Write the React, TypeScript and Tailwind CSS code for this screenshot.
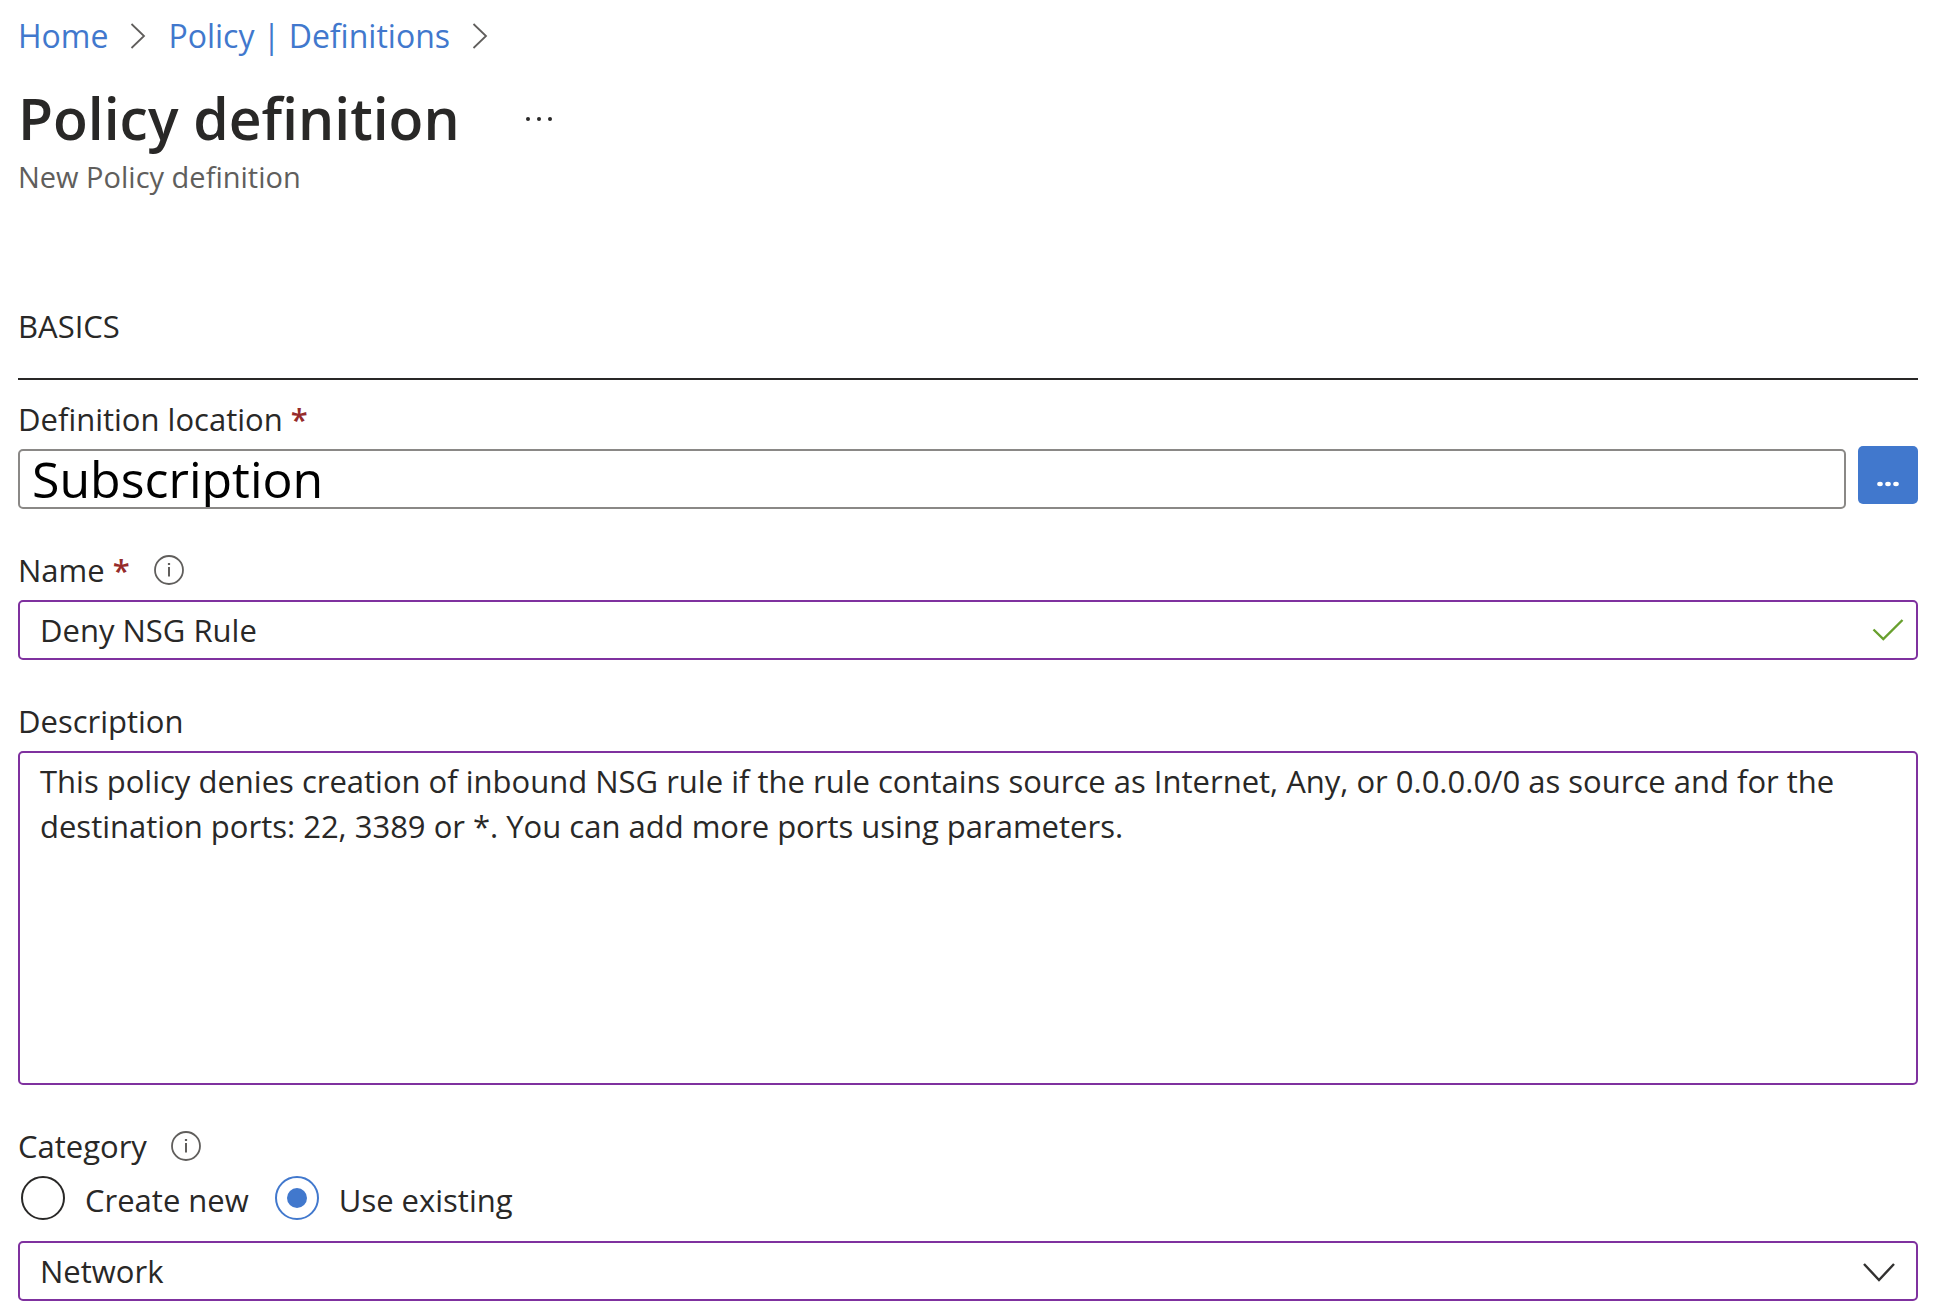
import { useState } from "react";
import type { ReactNode } from "react";

const DESCRIPTION =
  "This policy denies creation of inbound NSG rule if the rule contains source as Internet, Any, or 0.0.0.0/0 as source and for the destination ports: 22, 3389 or *. You can add more ports using parameters.";

function Chevron() {
  return (
    <svg width="16" height="28" viewBox="0 0 16 28" fill="none" stroke="#605e5c" strokeWidth="1.8" aria-hidden="true">
      <path d="M1.5 2 14 14 1.5 26" />
    </svg>
  );
}

function InfoIcon() {
  return (
    <svg width="30" height="30" viewBox="0 0 30 30" fill="none" stroke="#605e5c" role="img" aria-label="More info">
      <circle cx="15" cy="15" r="14" strokeWidth="1.8" />
      <path d="M15 12V21.5" strokeWidth="2" />
      <path d="M15 8V10" strokeWidth="2.2" />
    </svg>
  );
}

function Required() {
  return <span className="ml-2 font-semibold text-[#962b2b]">*</span>;
}

interface FieldProps {
  label: string;
  htmlFor: string;
  required?: boolean;
  info?: boolean;
  children: ReactNode;
}

function Field({ label, htmlFor, required, info, children }: FieldProps) {
  return (
    <div className="flex flex-col gap-2">
      <div className="flex items-center gap-6">
        <label htmlFor={htmlFor} className="leading-[44px]">
          {label}
          {required && <Required />}
        </label>
        {info && <InfoIcon />}
      </div>
      {children}
    </div>
  );
}

interface RadioProps {
  label: string;
  checked: boolean;
  onChange: () => void;
}

function Radio({ label, checked, onChange }: RadioProps) {
  return (
    <label className="flex h-11 gap-5 leading-[48px]">
      <input
        type="radio"
        name="category-mode"
        checked={checked}
        onChange={onChange}
        className="grid size-11 appearance-none place-items-center rounded-full border-2 border-[#292827] before:size-5 before:rounded-full checked:border-[#4178cd] checked:before:bg-[#4178cd]"
      />
      {label}
    </label>
  );
}

export default function App() {
  const [name, setName] = useState("Deny NSG Rule");
  const [description, setDescription] = useState(DESCRIPTION);
  const [mode, setMode] = useState("existing");

  return (
    <main className="min-h-screen bg-white pt-[14px] pr-5 pb-3 pl-[18px] font-['Open_Sans',sans-serif] text-[31px] text-[#292827]">
      <nav aria-label="Breadcrumb" className="flex items-center gap-[22px] text-[32px] leading-[44px] text-[#4178cd]">
        <a href="#home">Home</a>
        <Chevron />
        <a href="#definitions">Policy | Definitions</a>
        <Chevron />
      </nav>

      <header className="mt-6">
        <div className="flex items-center gap-16">
          <h1 className="text-[57px] leading-[72px] font-semibold">Policy definition</h1>
          <button type="button" aria-label="More actions">
            <svg width="32" height="8" viewBox="0 0 32 8" fill="#292827">
              <circle cx="4" cy="5" r="2" />
              <circle cx="15" cy="5" r="2" />
              <circle cx="26" cy="5" r="2" />
            </svg>
          </button>
        </div>
        <p className="mt-[3px] text-[29px] leading-10 text-[#605e5c]">New Policy definition</p>
      </header>

      <h2 className="mt-[107px] border-b-2 border-[#292827] pb-[30px] leading-[44px]">BASICS</h2>

      <form className="mt-[17px] flex flex-col gap-[39px]">
        <Field label="Definition location" htmlFor="location" required>
          <div className="flex gap-3">
            <input
              id="location"
              type="text"
              readOnly
              value="Subscription"
              className="h-[60px] min-w-0 flex-1 rounded-[5px] border-2 border-[#8a8886] px-3 text-[50px] leading-[56px] text-black outline-none"
            />
            <button
              type="button"
              aria-label="Select definition location"
              className="-mt-[3px] flex h-[58px] w-[60px] items-center justify-center rounded-[5px] bg-[#4178cd] pt-[18px]"
            >
              <svg width="22" height="6" viewBox="0 0 22 6" fill="#fff">
                <ellipse cx="3" cy="3" rx="2.8" ry="2.2" />
                <ellipse cx="11" cy="3" rx="2.8" ry="2.2" />
                <ellipse cx="19" cy="3" rx="2.8" ry="2.2" />
              </svg>
            </button>
          </div>
        </Field>

        <Field label="Name" htmlFor="name" required info>
          <div className="relative">
            <input
              id="name"
              type="text"
              value={name}
              onChange={(e) => setName(e.target.value)}
              className="block h-[60px] w-full rounded-[5px] border-2 border-[#7f319f] pr-16 pl-5 outline-none"
            />
            <svg
              className="absolute top-[18px] right-[14px]"
              width="32"
              height="24"
              viewBox="0 0 32 24"
              fill="none"
              stroke="#68a02e"
              strokeWidth="2.4"
              aria-hidden="true"
            >
              <path d="M1.5 11.5 11.3 21 30.5 2" />
            </svg>
          </div>
        </Field>

        <Field label="Description" htmlFor="description">
          <textarea
            id="description"
            value={description}
            onChange={(e) => setDescription(e.target.value)}
            className="block h-[334px] w-full resize-none rounded-[5px] border-2 border-[#7f319f] px-5 py-[6px] leading-[45px] outline-none"
          />
        </Field>

        <Field label="Category" htmlFor="category" info>
          <div className="flex gap-[26px] pl-[3px]">
            <Radio label="Create new" checked={mode === "new"} onChange={() => setMode("new")} />
            <Radio label="Use existing" checked={mode === "existing"} onChange={() => setMode("existing")} />
          </div>
          <div className="relative mt-[13px]">
            <select
              id="category"
              className="block h-[60px] w-full appearance-none rounded-[5px] border-2 border-[#7f319f] bg-white px-5 outline-none"
            >
              <option>Network</option>
            </select>
            <svg
              className="pointer-events-none absolute top-5 right-[22px]"
              width="34"
              height="22"
              viewBox="0 0 34 22"
              fill="none"
              stroke="#323130"
              strokeWidth="2.4"
              aria-hidden="true"
            >
              <path d="M2 3 17 19 32 3" />
            </svg>
          </div>
        </Field>
      </form>
    </main>
  );
}
